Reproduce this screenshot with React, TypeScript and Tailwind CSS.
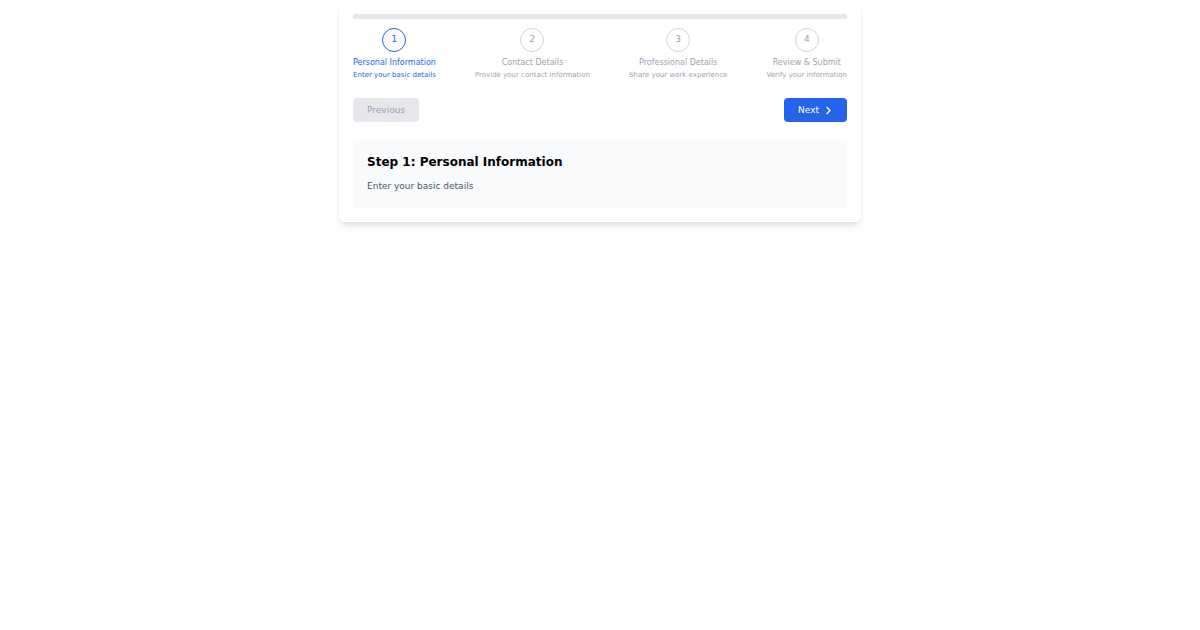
import { useState } from "react";
import { clsx } from "clsx";
import { FaCheck, FaChevronRight } from "react-icons/fa";

interface Step {
  title: string;
  description: string;
}

const steps: Step[] = [
  { title: "Personal Information", description: "Enter your basic details" },
  { title: "Contact Details", description: "Provide your contact information" },
  { title: "Professional Details", description: "Share your work experience" },
  { title: "Review & Submit", description: "Verify your information" },
];

function StepItem({
  step,
  index,
  current,
}: {
  step: Step;
  index: number;
  current: number;
}) {
  const reached = index <= current;

  return (
    <li
      aria-current={index === current ? "step" : undefined}
      className={clsx(
        "flex flex-col items-center text-center",
        reached ? "text-[#2563eb]" : "text-[#9ca3af]"
      )}
    >
      <div
        className={clsx(
          "flex size-6 items-center justify-center rounded-full border text-[9px]",
          index < current && "border-[#2563eb] bg-[#2563eb] text-white",
          index === current && "border-[#2563eb]",
          index > current && "border-[#d1d5db]"
        )}
      >
        {index < current ? <FaCheck /> : index + 1}
      </div>
      <p className="mt-1 text-[8px] leading-[13px]">{step.title}</p>
      <p className="mt-0.5 text-[7px] leading-[9px]">{step.description}</p>
    </li>
  );
}

export default function App() {
  const [current, setCurrent] = useState(0);
  const progress = (current / (steps.length - 1)) * 100;
  const isFirst = current === 0;
  const isLast = current === steps.length - 1;

  return (
    <div className="min-h-screen bg-white font-['DejaVu_Sans',sans-serif] text-[9px] text-black">
      <main className="mx-auto w-full max-w-[522px] rounded-[5px] bg-white p-3.5 shadow-[0_6px_9px_-2px_rgba(0,0,0,0.1),0_2px_4px_-2px_rgba(0,0,0,0.1)]">
        <div className="h-[5px] overflow-hidden rounded-full bg-[#e5e7eb]">
          <div className="h-full bg-[#2563eb]" style={{ width: `${progress}%` }} />
        </div>

        <ol className="mt-[9px] flex justify-between">
          {steps.map((step, index) => (
            <StepItem key={step.title} step={step} index={index} current={current} />
          ))}
        </ol>

        <div className="mt-[18px] flex justify-between leading-6">
          <button
            type="button"
            disabled={isFirst}
            onClick={() => setCurrent(current - 1)}
            className="rounded-[4px] bg-[#e5e7eb] px-3.5 text-[#4b5563] disabled:cursor-not-allowed disabled:text-[#9ca3af]"
          >
            Previous
          </button>
          <button
            type="button"
            disabled={isLast}
            onClick={() => setCurrent(current + 1)}
            className="flex items-center gap-[5px] rounded-[4px] bg-[#2563eb] px-3.5 text-white"
          >
            Next
            <FaChevronRight />
          </button>
        </div>

        <section className="mt-[18px] rounded-[4px] bg-[#f9fafb] p-3.5">
          <h2 className="text-[12px] leading-4 font-bold">
            Step {current + 1}: {steps[current].title}
          </h2>
          <p className="mt-[9px] leading-[15px] text-[#4b5563]">
            {steps[current].description}
          </p>
        </section>
      </main>
    </div>
  );
}
